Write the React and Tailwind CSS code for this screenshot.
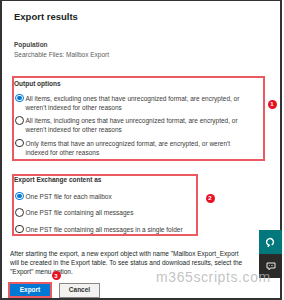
import React from 'react';

function Radio({ checked }) {
  return (
    <span
      className={`mt-[0.25px] ml-[1px] shrink-0 w-[8.5px] h-[8.5px] rounded-full border flex items-center justify-center bg-white ${checked ? 'border-[#0078d4]' : 'border-[#323130]'}`}
    >
      {checked && <span className="w-[4.5px] h-[4.5px] rounded-full bg-[#0078d4]" />}
    </span>
  );
}

function Option({ checked, children }) {
  return (
    <div className="flex items-start gap-[2px]">
      <Radio checked={checked} />
      <div className="leading-[9px] text-[#3b3a39]">{children}</div>
    </div>
  );
}

function Badge({ n, className }) {
  return (
    <div
      className={`absolute w-[9px] h-[9px] rounded-full bg-[#e81123] text-white text-[6px] font-bold leading-none flex items-center justify-center ${className}`}
    >
      {n}
    </div>
  );
}

export default function App() {
  return (
    <div
      className="relative w-[284px] h-[300px] bg-white overflow-hidden text-[6.5px]"
      style={{ fontFamily: '"Liberation Sans", Arial, sans-serif' }}
    >
      <div className="w-[282px] h-[300px] border-l-2 border-t border-r-2 border-b-2 border-[#333] overflow-hidden pt-[8px] pl-[10px]">
        <h1 className="ml-[2px] text-[9.5px] font-bold leading-[16px] text-[#201f1e]">Export results</h1>

        <div className="ml-[2px] mt-[15px] leading-[10px]">
          <div className="font-bold text-[#484644]">Population</div>
          <div className="text-[#605e5c]">Searchable Files: Mailbox Export</div>
        </div>

        {/* Output options */}
        <div className="mt-[16px] w-[253px] h-[85px] border-2 border-[#eb5a61] pt-[1px]">
          <div className="font-bold leading-[10px] text-[#323130]">Output options</div>
          <div className="mt-[4.5px] flex flex-col gap-[4.5px]">
            <Option checked>
              All items, excluding ones that have unrecognized format, are encrypted, or
              <br />
              weren't indexed for other reasons
            </Option>
            <Option>
              All items, including ones that have unrecognized format, are encrypted, or
              <br />
              weren't indexed for other reasons
            </Option>
            <Option>
              Only items that have an unrecognized format, are encrypted, or weren't
              <br />
              indexed for other reasons
            </Option>
          </div>
        </div>

        {/* Export Exchange content as */}
        <div className="mt-[13px] w-[186px] h-[62px] border-2 border-[#eb5a61]">
          <div className="font-bold leading-[8px] text-[#323130]">Export Exchange content as</div>
          <div className="mt-[7.5px] flex flex-col gap-[7.5px]">
            <Option checked>One PST file for each mailbox</Option>
            <Option>One PST file containing all messages</Option>
            <Option>One PST file containing all messages in a single folder</Option>
          </div>
        </div>

        <p className="-ml-[2px] mt-[12.5px] leading-[9px] text-[#201f1e] whitespace-nowrap">
          After starting the export, a new export object with name "Mailbox Export_Export
          <br />
          will be created in the Export table. To see status and download results, select the
          <br />
          "Export" menu option.
        </p>

        <div className="-ml-[4px] mt-[6.5px] flex items-start gap-[7px]">
          <button className="w-[44px] h-[16px] border-2 border-[#eb5a61] bg-[#0078d4] text-white font-bold text-[6.5px] leading-none">
            Export
          </button>
          <button className="mt-[1px] w-[41px] h-[15px] border border-[#8a8886] bg-[#f3f2f1] text-[#323130] font-bold text-[6.5px] leading-none">
            Cancel
          </button>
        </div>
      </div>

      {/* floating side panel */}
      <div className="absolute left-[259px] top-[230px] w-[23px] flex flex-col">
        <div className="h-[24px] bg-[#03787c] flex items-center justify-center">
          <svg width="9" height="10" viewBox="0 0 9 10" fill="none" stroke="white" strokeWidth="1.4" strokeLinecap="round">
            <path d="M3 8.2 A3.4 3.4 0 1 1 6.2 7.6" />
            <path d="M3 8.2 L2.2 9.4" />
          </svg>
        </div>
        <div className="h-[24px] bg-[#2b2a29] flex items-center justify-center">
          <svg width="10" height="9" viewBox="0 0 10 9" fill="none" stroke="white" strokeWidth="0.9">
            <path d="M1 1 H9 V6 H4.5 L3 7.8 V6 H1 Z" />
            <path d="M3.5 3.5 H4 M5 3.5 H5.5 M6.5 3.5 H7" strokeWidth="1" />
          </svg>
        </div>
      </div>

      {/* watermark */}
      <div className="absolute left-[156px] top-[268px] text-[14px] tracking-[0.6px] leading-[18px] text-[#b4b4b4]/80">
        m365scripts.com
      </div>

      <Badge n="1" className="left-[267.5px] top-[99.5px]" />
      <Badge n="2" className="left-[205.5px] top-[193.5px]" />
      <Badge n="3" className="left-[51.5px] top-[271px]" />
    </div>
  );
}
